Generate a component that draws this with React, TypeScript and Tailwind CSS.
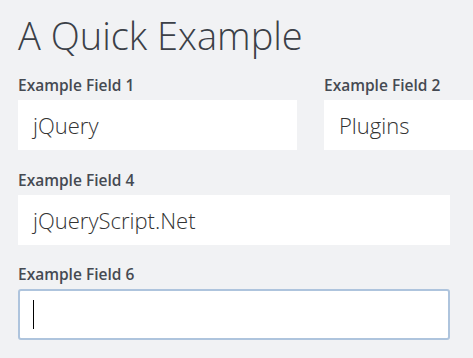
import React from "react";

const font = { fontFamily: '"Open Sans", sans-serif' };

function Field({ label, value, width, focused }: { label: string; value?: string; width: string; focused?: boolean }) {
  return (
    <div className={`${width} shrink-0`}>
      <div className="text-[15.5px] leading-[20px] font-semibold text-[#454a52] whitespace-nowrap">{label}</div>
      <div
        className={`mt-[5px] h-[50px] bg-white flex items-center text-[22px] font-light text-[#333] whitespace-nowrap ${
          focused ? "border-2 border-[#aec4dd] rounded-[3px] h-[51px] pl-[13px]" : "pl-[15px]"
        }`}
      >
        {focused ? <span className="block w-px h-[29px] bg-black" /> : <span>{value}</span>}
      </div>
    </div>
  );
}

export default function App() {
  return (
    <div className="w-[473px] h-[358px] overflow-hidden bg-[#f1f2f4]" style={font}>
      <div className="pl-[18px] pt-[16px]">
        <h1 className="text-[38px] leading-[38px] font-light text-[#3b4047] whitespace-nowrap">A Quick Example</h1>
        <div className="mt-[21px] flex gap-[27px]">
          <Field label="Example Field 1" value="jQuery" width="w-[279px]" />
          <Field label="Example Field 2" value="Plugins" width="w-[279px]" />
        </div>
        <div className="mt-[20px]">
          <Field label="Example Field 4" value="jQueryScript.Net" width="w-[432px]" />
        </div>
        <div className="mt-[19px]">
          <Field label="Example Field 6" width="w-[432px]" focused />
        </div>
      </div>
    </div>
  );
}
